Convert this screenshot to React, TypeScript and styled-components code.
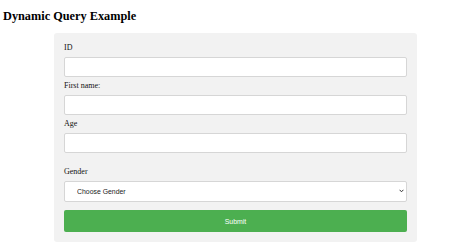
import React from "react";
import styled, { createGlobalStyle } from "styled-components";

const Global = createGlobalStyle`
  html, body { margin: 0; padding: 0; background: #ffffff; }
  body { padding: 0 3px; font-family: "Liberation Serif", "Times New Roman", serif; }
`;

const Title = styled.h2`
  margin: 9px 0;
  font-family: "Liberation Serif", "Times New Roman", serif;
  font-weight: bold;
  font-size: 12.3px;
  line-height: 15px;
  color: #000;
`;

const Panel = styled.div`
  margin-left: 51px;
  width: 363px;
  box-sizing: border-box;
  padding: 10px 10px 6px;
  background: #f2f2f2;
  border-radius: 3px;
`;

const Form = styled.form`
  display: flex;
  flex-direction: column;
`;

const Label = styled.label<{ $spaced?: boolean }>`
  display: block;
  font-family: "Liberation Serif", "Times New Roman", serif;
  font-size: 8px;
  line-height: 10px;
  color: #111;
  margin-top: ${(p) => (p.$spaced ? "10px" : "0")};
`;

const Field = styled.input`
  box-sizing: border-box;
  width: 100%;
  height: 20px;
  margin: 4px 0;
  padding: 0 10px;
  border: 1px solid #d6d6d6;
  border-radius: 2px;
  background: #fff;
  font-family: "Liberation Sans", Arial, sans-serif;
  font-size: 6.9px;
  outline: none;
`;

const SelectWrap = styled.div`
  position: relative;
  margin: 4px 0;
`;

const Select = styled.select`
  display: block;
  box-sizing: border-box;
  width: 100%;
  height: 21px;
  margin: 0;
  padding: 0 14px 0 12px;
  border: 1px solid #d6d6d6;
  border-radius: 2px;
  background: #fff;
  color: #222;
  font-family: "Liberation Sans", Arial, sans-serif;
  font-size: 6.9px;
  appearance: none;
  -webkit-appearance: none;
  outline: none;
`;

const Chevron = styled.svg`
  position: absolute;
  right: 3px;
  top: 8px;
  width: 5px;
  height: 4px;
  pointer-events: none;
`;

const Submit = styled.button`
  box-sizing: border-box;
  width: 100%;
  height: 22px;
  margin: 4px 0;
  border: none;
  border-radius: 2px;
  background: #4caf50;
  color: #fff;
  font-family: "Liberation Sans", Arial, sans-serif;
  font-size: 6.9px;
  cursor: pointer;
`;

export default function App() {
  return (
    <>
      <Global />
      <Title>Dynamic Query Example</Title>
      <Panel>
        <Form onSubmit={(e) => e.preventDefault()}>
          <Label htmlFor="id">ID</Label>
          <Field id="id" type="text" />
          <Label htmlFor="fname">First name:</Label>
          <Field id="fname" type="text" />
          <Label htmlFor="age">Age</Label>
          <Field id="age" type="text" />
          <Label htmlFor="gender" $spaced>
            Gender
          </Label>
          <SelectWrap>
            <Select id="gender" defaultValue="">
              <option value="">Choose Gender</option>
              <option value="male">Male</option>
              <option value="female">Female</option>
            </Select>
            <Chevron viewBox="0 0 5 4">
              <path d="M0.6 0.8 L2.5 2.8 L4.4 0.8" fill="none" stroke="#333" strokeWidth="1" />
            </Chevron>
          </SelectWrap>
          <Submit type="submit">Submit</Submit>
        </Form>
      </Panel>
    </>
  );
}
